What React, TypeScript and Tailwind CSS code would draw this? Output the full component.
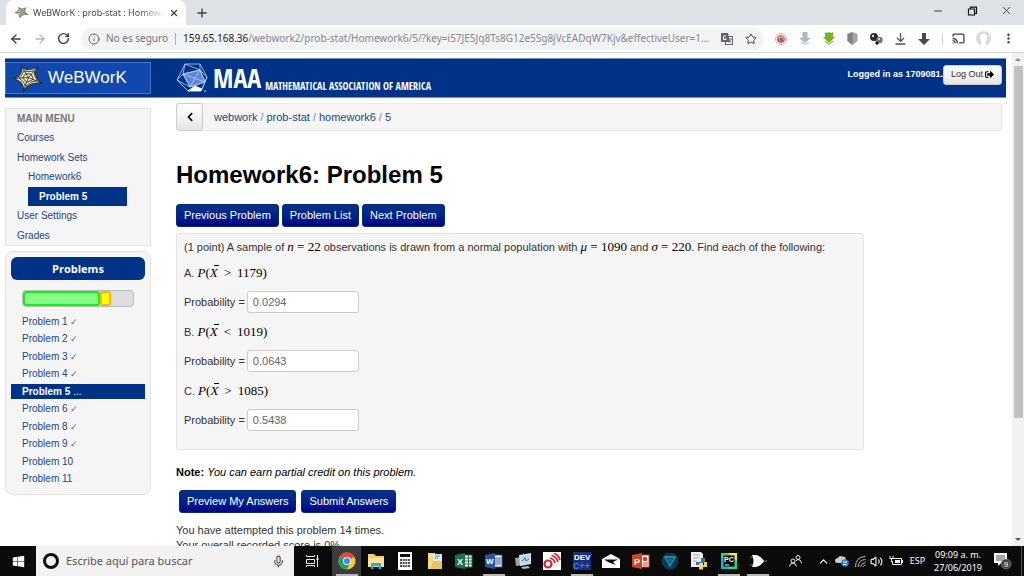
import type { ReactNode } from "react";
import { ArrowLeft, ArrowRight, RotateCw, Info, Plus, X, Star, Cast, MoreVertical, Mic, ChevronUp, Volume2, Minus } from "lucide-react";
import { FaChevronLeft, FaSignOutAlt, FaWindows } from "react-icons/fa";

interface ProblemLink {
  label: string;
  mark?: string;
}

interface Part {
  letter: string;
  sign: string;
  bound: string;
  answer: string;
}

const PROBLEMS: ProblemLink[] = [
  { label: "Problem 1", mark: "✓" },
  { label: "Problem 2", mark: "✓" },
  { label: "Problem 3", mark: "✓" },
  { label: "Problem 4", mark: "✓" },
  { label: "Problem 5", mark: "..." },
  { label: "Problem 6", mark: "✓" },
  { label: "Problem 8", mark: "✓" },
  { label: "Problem 9", mark: "✓" },
  { label: "Problem 10" },
  { label: "Problem 11" },
];

const PARTS: Part[] = [
  { letter: "A", sign: ">", bound: "1179", answer: "0.0294" },
  { letter: "B", sign: "<", bound: "1019", answer: "0.0643" },
  { letter: "C", sign: ">", bound: "1085", answer: "0.5438" },
];

function WebIcon({ size }: { size: number }) {
  return (
    <svg width={size} height={size} viewBox="0 0 32 28" fill="none" stroke="#2b2b2b" strokeWidth="0.9" className="shrink-0">
      <path d="M0.500 14 Q6 13 8 10 Q11 6 9.500 1 Q13 5 17 5 Q22 5 27 2 Q23 7 25 12 Q27 17 31.500 19 Q25 18 20 20 Q15 22 12 27 Q12 21 9 18 Q6 15 0.500 14 Z" fill="#efedcb" strokeWidth="1.200" />
      <path d="M1 14 L17 13 M10 2 L17 13 L26 3 M17 13 L31 19 M17 13 L12 26" />
      <path d="M7 13.500 Q11 11 12 6 Q17 8 23 6 Q22 11 26 16 Q19 17 14 22 Q13 17 7 13.500 Z M11 13.300 L14 9 L20 9.500 L22 15 L15 18 Z" />
    </svg>
  );
}

function MaaIcon() {
  return (
    <svg width="33" height="30" viewBox="0 0 33 30" fill="none" stroke="#b9cdf3" strokeWidth="0.8" className="shrink-0">
      <path d="M7 11 L24 7 L29 19 L14 24 Z" fill="#5f86d6" />
      <path d="M9 1 L24 1 L31 14 L26 26 L12 28 L1 17 Z" />
      <path d="M9 1 L7 11 L24 7 L9 1 M24 1 L24 7 L31 14 L29 19 L24 7 L14 24 L7 11 L1 17 L14 24 L29 19 L26 26 M1 17 L12 28 M7 11 L29 19" />
      <path d="M12 28 L19 23 L26 26 L25 28 Z" fill="#fff" stroke="#fff" />
      <circle cx="29" cy="28" r="0.8" fill="#fff" stroke="none" />
    </svg>
  );
}

function BrowserChrome() {
  return (
    <header className="shrink-0 bg-[#dee1e6] font-['Noto_Sans',sans-serif] text-[#3c4043]">
      <div className="flex h-[25px] items-stretch">
        <div className="ml-[6px] flex w-[180px] items-center rounded-t-lg bg-white pl-[9px] pr-[6px]">
          <WebIcon size={13} />
          <span className="ml-[5px] w-[132px] whitespace-nowrap bg-gradient-to-r from-[#3c4043] from-80% to-transparent bg-clip-text text-[9px] text-transparent">
            WeBWorK : prob-stat : Homewor
          </span>
          <button aria-label="Close tab" className="ml-[4px]"><X size={10} strokeWidth={3} /></button>
        </div>
        <button aria-label="New tab" className="ml-[9px]"><Plus size={14} strokeWidth={2.4} /></button>
        <div className="ml-auto flex items-center gap-[22px] pr-[11px] pb-1">
          <button aria-label="Minimize"><Minus size={12} strokeWidth={2} /></button>
          <button aria-label="Restore">
            <svg width="12" height="12" viewBox="0 0 12 12" fill="none" stroke="#111" strokeWidth="1.2">
              <path d="M2.5 4 H8.500 V10 H2.5 Z M4.500 4 V2.200 H10.500 V8.300 H8.500" />
            </svg>
          </button>
          <button aria-label="Close"><X size={13} strokeWidth={1.8} /></button>
        </div>
      </div>
      <div className="flex h-7 items-center border-b border-[#d5d6d8] bg-white pl-[9px] pr-[9px]">
        <div className="flex items-center gap-[10px]">
          <button aria-label="Back"><ArrowLeft size={14} strokeWidth={2.4} /></button>
          <button aria-label="Forward"><ArrowRight size={14} strokeWidth={2.2} className="text-[#b5b7ba]" /></button>
          <button aria-label="Reload"><RotateCw size={13} strokeWidth={2.6} /></button>
        </div>
        <div className="ml-[11px] flex h-[22px] min-w-0 flex-1 items-center rounded-full bg-[#f1f3f4] pl-[7px] pr-[7px] text-[11px]">
          <Info size={12} strokeWidth={2} className="shrink-0 text-[#5f6368]" />
          <span className="ml-[6px] shrink-0 text-[10px] text-[#6f7377]">No es seguro</span>
          <span className="mx-[7px] h-3 w-px shrink-0 bg-[#a9acb0]" />
          <span className="min-w-0 flex-1 truncate text-[10px] text-[#85888c]">
            <span className="text-[#202124]">159.65.168.36</span>
            /webwork2/prob-stat/Homework6/5/?key=i57JE5Jq8Ts8G12e5Sg8jVcEADqW7Kjv&amp;effectiveUser=1...
          </span>
          <button aria-label="Translate" className="ml-3 shrink-0">
            <svg width="12" height="12" viewBox="0 0 12 12" fill="none" stroke="#5f6368">
              <rect x="4.500" y="3.500" width="7" height="8" fill="#fff" />
              <path d="M0 0 H7 L9 9 H0 Z" fill="#5f6368" stroke="none" />
              <path d="M5 3 H2.500 V6.500 H5 V5" stroke="#fff" />
              <path d="M7 6 H11 M9 5 V6 M10.500 6 L7.500 10 M8 7 L10.500 10" strokeWidth="0.7" />
            </svg>
          </button>
          <button aria-label="Bookmark" className="ml-[12px] shrink-0"><Star size={12} strokeWidth={2} /></button>
        </div>
        <div className="flex items-center gap-[12px] pl-[11px]">
          <svg width="12" height="12" viewBox="0 0 12 12">
            <circle cx="6" cy="6" r="5.500" fill="#fbe9f0" stroke="#d58ba6" strokeWidth="0.700" />
            <circle cx="6" cy="6" r="3.800" fill="#e33c34" />
            <path d="M3 3.800 L8.500 3 L9 7 L5 9 Z" fill="#f2b632" />
            <circle cx="6.500" cy="6.800" r="2" fill="#597bb8" />
          </svg>
          <svg width="12" height="13" viewBox="0 0 12 13"><path d="M3.500 0 H8.500 V6 H12 L6 11 L0 6 H3.500 Z" fill="#a9bac3" /><path d="M2 10.500 L6 12.500 L10 10.500" stroke="#a9bac3" fill="none" /></svg>
          <svg width="12" height="13" viewBox="0 0 12 13"><path d="M2 0 L4 1 L6 0 L8 1 L10 0 V5 H12 L6 11 L0 5 H2 Z" fill="#74b816" /><path d="M2 9 L6 12.500 L10 9" stroke="#5c9a12" fill="none" /></svg>
          <svg width="11" height="13" viewBox="0 0 11 13"><path d="M5.500 0 L10.500 2 V9 L5.500 13 L0.500 9 V2 Z" fill="#a5a5a5" /><path d="M5.500 0 V13 L0.500 9 V2 Z" fill="#828282" /></svg>
          <svg width="13" height="12" viewBox="0 0 13 12">
            <circle cx="4" cy="4" r="4" fill="#2a2a2a" /><circle cx="9.500" cy="7" r="3.200" fill="#777" /><circle cx="7" cy="10" r="1.800" fill="#222" />
            <circle cx="3" cy="3" r="1.200" fill="#ddd" /><circle cx="9" cy="6" r="1.100" fill="#ddd" />
          </svg>
          <svg width="11" height="12" viewBox="0 0 11 12" fill="none" stroke="#505357" strokeWidth="1.300"><path d="M5.500 0 V8 M2 5 L5.500 8.400 L9 5 M0.500 11 H10.500" /></svg>
          <svg width="12" height="12" viewBox="0 0 12 12"><path d="M4 0 H8 V6 H12 L6 12 L0 6 H4 Z" fill="#4a4a4a" /></svg>
          <span className="h-3 w-px bg-[#cfd1d4]" />
        </div>
        <div className="flex items-center gap-[11px] pl-[9px]">
          <button aria-label="Cast"><Cast size={13} strokeWidth={2.4} /></button>
          <button aria-label="Profile">
            <svg width="15" height="15" viewBox="0 0 15 15">
              <circle cx="7.500" cy="7.500" r="7.500" fill="#d9dadc" /><ellipse cx="7.500" cy="6.800" rx="3.600" ry="4" fill="#fff" /><rect x="5" y="9.500" width="5" height="5.500" fill="#fff" />
            </svg>
          </button>
          <button aria-label="Menu"><MoreVertical size={13} strokeWidth={2.6} /></button>
        </div>
      </div>
    </header>
  );
}

function Navbar() {
  return (
    <div className="flex h-10 items-center border-y border-[#7190c8] bg-[#003388] text-white">
      <a href="#webwork" className="flex h-8 w-[146px] shrink-0 items-center border border-[#4c74c2] bg-[#1048ae] pl-[6px] text-[17px]">
        <WebIcon size={31} />
        <span className="ml-[5px]">WeBWorK</span>
      </a>
      <a href="#maa" className="ml-[25px] flex items-center font-['Open_Sans_Condensed','Liberation_Sans_Narrow','Liberation_Sans',sans-serif] font-bold">
        <MaaIcon />
        <span className="ml-1 text-[26px] leading-8">MAA</span>
        <span className="ml-[4px] pt-4 text-[10px] leading-4">MATHEMATICAL ASSOCIATION OF AMERICA</span>
      </a>
      <div className="ml-auto flex items-center pr-1 pb-[7px] text-[9px]">
        <span className="font-bold">Logged in as 1709081.</span>
        <button className="flex h-5 items-center gap-[2px] rounded-[3px] border border-[#ccc] bg-gradient-to-b from-white to-[#e6e6e6] px-[7px] text-[#333]">
          Log Out <FaSignOutAlt size={9} className="text-black" />
        </button>
      </div>
    </div>
  );
}

function Sidebar() {
  return (
    <aside className="w-[146px] shrink-0 pt-[5px] text-[10px] text-[#1c4587]">
      <nav className="flex h-[138px] flex-col border border-[#e3e3e3] bg-[#f5f5f5] leading-[19px]">
        <h2 className="flex-1 pl-[11px] font-bold text-[#777]">MAIN MENU</h2>
        <a href="#courses" className="flex-1 pl-[11px]">Courses</a>
        <a href="#sets" className="flex-1 pl-[11px]">Homework Sets</a>
        <a href="#hw6" className="flex-1 pl-[22px]">Homework6</a>
        <a href="#p5" className="ml-[22px] mr-[23px] flex-1 bg-[#003388] pl-[11px] font-bold text-white">Problem 5</a>
        <a href="#settings" className="flex-1 pl-[11px]">User Settings</a>
        <a href="#grades" className="flex-1 pl-[11px]">Grades</a>
      </nav>
      <nav className="mt-[5px] rounded-lg border border-[#e3e3e3] bg-[#f5f5f5] px-[5px] pt-[5px] pb-[6px]">
        <h2 className="rounded-md bg-[#003388] text-center font-['Open_Sans',sans-serif] text-[11px] font-bold leading-[23px] text-white">Problems</h2>
        <div className="mx-[11px] mt-[10px] mb-[6px] flex h-[17px] overflow-hidden rounded-[4px] border border-[#bbb] bg-[#ddd]">
          <div className="w-[70%] rounded-[3px] border-2 border-[#12f312] bg-[#8f8]" />
          <div className="w-[10%] rounded-[3px] border-2 border-[#ffb01f] bg-[#ff0]" />
        </div>
        <ul className="flex h-[175px] flex-col">
          {PROBLEMS.map((p) => (
            <li key={p.label} className="flex flex-1 items-center">
              <a
                href="#problem"
                className={p.mark === "..." ? "flex-1 bg-[#003388] pl-[11px] font-bold leading-[15px] text-white" : "flex-1 pl-[11px] leading-[15px]"}
              >
                {p.label} <span className={p.mark === "..." ? "font-normal" : "text-[9px] text-[#667]"}>{p.mark}</span>
              </a>
            </li>
          ))}
        </ul>
      </nav>
    </aside>
  );
}

function BlueButton({ children }: { children: ReactNode }) {
  return (
    <button className="h-[23px] whitespace-nowrap rounded-[3px] border border-[#0a2a78] bg-gradient-to-b from-[#003388] to-[#000088] px-[7px] text-[11px] text-white">
      {children}
    </button>
  );
}

function MathText({ children }: { children: ReactNode }) {
  return <span className="font-['Liberation_Serif',serif] text-[13px] text-black">{children}</span>;
}

function ProblemPage() {
  return (
    <main className="min-w-0 flex-1 text-[11px] text-[#333]">
      <div className="flex h-7 items-center rounded-[3px] border border-[#e8e8e8] bg-[#f5f5f5]">
        <button aria-label="Back to set" className="-my-px -ml-px flex h-7 w-[27px] items-center justify-center rounded-[3px] border border-[#ccc] bg-gradient-to-b from-white to-[#e6e6e6]">
          <FaChevronLeft size={10} className="text-black" />
        </button>
        <div className="ml-[11px] flex gap-[3px] text-[#1c4587]">
          <a href="#webwork">webwork</a>
          <span className="text-[#888]">/</span>
          <a href="#prob-stat">prob-stat</a>
          <span className="text-[#888]">/</span>
          <a href="#homework6">homework6</a>
          <span className="text-[#888]">/</span>
          <span>5</span>
        </div>
      </div>
      <h1 className="mt-7 text-[24px] font-bold leading-8 text-black">Homework6: Problem 5</h1>
      <div className="mt-[13px] flex gap-[3px]">
        <BlueButton>Previous Problem</BlueButton>
        <BlueButton>Problem List</BlueButton>
        <BlueButton>Next Problem</BlueButton>
      </div>
      <section className="mt-[6px] w-5/6 rounded-[3px] border border-[#e3e3e3] bg-[#f5f5f5] px-[7px] pt-[3px] pb-[15px]">
        <p className="whitespace-nowrap leading-5">
          (1 point) A sample of <MathText><i>n</i> = 22</MathText> observations is drawn from a normal population with{" "}
          <MathText><i>μ</i> = 1090</MathText> and <MathText><i>σ</i> = 220</MathText>. Find each of the following:
        </p>
        {PARTS.map((part) => (
          <div key={part.letter}>
            <p className="pt-[6px] leading-5">
              {part.letter}.{" "}
              <MathText>
                <i>P</i>(<i className="relative">X<span className="absolute left-[4px] top-0 h-px w-[5px] bg-black" /></i>
                <span className="mx-[6px]">{part.sign}</span>
                {part.bound})
              </MathText>
            </p>
            <label className="mt-2 flex items-center gap-[2px] pb-[3px]">
              Probability =
              <input
                type="text"
                defaultValue={part.answer}
                className="h-[22px] w-28 rounded-[3px] border border-[#ccc] bg-white px-[5px] text-[11px] text-[#666] outline-none"
              />
            </label>
          </div>
        ))}
      </section>
      <p className="mt-[15px] leading-[15px]">
        <b className="text-black">Note:</b> <i className="text-black">You can earn partial credit on this problem.</i>
      </p>
      <div className="mt-[10px] ml-[3px] flex gap-[5px]">
        <BlueButton>Preview My Answers</BlueButton>
        <BlueButton>Submit Answers</BlueButton>
      </div>
      <p className="mt-[10px] leading-[15px]">
        You have attempted this problem 14 times.
        <br />
        Your overall recorded score is 0%.
      </p>
    </main>
  );
}

const APPS: { name: string; open?: boolean; icon: ReactNode }[] = [
  {
    name: "Chrome",
    open: true,
    icon: (
      <>
        <circle cx="9" cy="9" r="8.500" fill="#f7c83c" />
        <path d="M9 9 L1.600 4.800 A8.500 8.500 0 0 1 16.400 4.800 Z" fill="#dd4b3e" />
        <path d="M9 9 L1.600 4.800 A8.500 8.500 0 0 0 9 17.500 L12 11 Z" fill="#1da462" />
        <circle cx="9" cy="9" r="4" fill="#fff" />
        <circle cx="9" cy="9" r="3.100" fill="#4587f3" />
      </>
    ),
  },
  {
    name: "File Explorer",
    icon: (
      <>
        <path d="M1 2 H7 L9 4 H17 V15 H1 Z" fill="#f3ce6b" />
        <path d="M1 6 H17 V15 H1 Z" fill="#fce294" />
        <path d="M4 17 V11 H14 V17 H11.500 V14 H6.500 V17 Z" fill="#35a6e3" />
      </>
    ),
  },
  {
    name: "Calculator",
    icon: (
      <>
        <rect x="2" y="0" width="14" height="18" fill="#fff" />
        <path d="M4 2 H14 V5 H4 Z" fill="#111" />
        <path d="M4 8 H14 M4 11 H14 M4 14 H14" stroke="#111" strokeWidth="1.600" strokeDasharray="2 0.660" />
      </>
    ),
  },
  {
    name: "Documents",
    icon: (
      <>
        <path d="M2 1 H9 V17 H2 Z" fill="#f5d983" />
        <path d="M7 8 H16 V17 H5 Z" fill="#e9c45f" />
        <rect x="7" y="2" width="9" height="7" fill="#dfeaf3" />
        <path d="M9 4 H14 M9 6 H12" stroke="#5f92b8" />
      </>
    ),
  },
  {
    name: "Excel",
    icon: (
      <>
        <rect x="9" y="3" width="8" height="12" fill="#fff" stroke="#1e7145" />
        <path d="M10 6 H17 M10 9 H17 M10 12 H17 M13.500 3 V15" stroke="#1e7145" />
        <path d="M0 3 L10 1 V17 L0 15 Z" fill="#1e7145" />
        <text x="2" y="12.500" fontSize="9" fontWeight="bold" fill="#fff">X</text>
      </>
    ),
  },
  {
    name: "Word",
    open: true,
    icon: (
      <>
        <rect x="9" y="3" width="8" height="12" fill="#fff" stroke="#2b579a" />
        <path d="M10 6 H16 M10 8 H16 M10 10 H16 M10 12 H16" stroke="#2b579a" />
        <path d="M0 3 L10 1 V17 L0 15 Z" fill="#2b579a" />
        <text x="1" y="12" fontSize="8" fontWeight="bold" fill="#fff">W</text>
      </>
    ),
  },
  {
    name: "Monitor",
    icon: (
      <>
        <path d="M1 6 L8 5 L9 13 L2 14 Z" fill="#9aa3a8" />
        <path d="M5 3 L17 1 V12 L6 14 Z" fill="#d5dde1" />
        <path d="M7 5 L15 3.500 V10.500 L8 12 Z" fill="#b5dcef" />
        <path d="M7.500 9 L9.500 8 L11 5.500 L12 9 L15 7" stroke="#3a7aa0" fill="none" />
        <path d="M7 15 L14 14 L16 16 L9 17 Z" fill="#b2b8bb" />
      </>
    ),
  },
  {
    name: "Recorder",
    icon: (
      <>
        <rect width="18" height="18" fill="#fff" />
        <g fill="none" stroke="#d9232e" strokeWidth="1.800">
          <circle cx="5" cy="12" r="3.500" strokeWidth="2.200" />
          <path d="M7 6 Q11 7 12 11 M8.500 3.500 Q14 5 15 10 M11 1.500 Q16 3 17 8" />
        </g>
      </>
    ),
  },
  {
    name: "Dev-C++",
    open: true,
    icon: (
      <>
        <rect width="18" height="18" fill="#1b2f78" />
        <text x="1" y="8" fontSize="8" fontWeight="bold" fill="#fff">DEV</text>
        <text x="0" y="17" fontSize="9" fontWeight="bold" fill="#2d7dff">C++</text>
      </>
    ),
  },
  {
    name: "Mail",
    icon: <path d="M0 7 L9 2 L18 7 V16 H0 Z M2 7.500 H16 L11 10 L14 13 L7 10.500 Z" fill="#fff" fillRule="evenodd" />,
  },
  {
    name: "PowerPoint",
    icon: (
      <>
        <rect x="9" y="3" width="8" height="12" fill="#fff" stroke="#d04423" />
        <path d="M11 11 H16 M11 13 H16" stroke="#d04423" />
        <circle cx="13" cy="7" r="2.300" fill="#d04423" />
        <path d="M0 3 L10 1 V17 L0 15 Z" fill="#d04423" />
        <text x="2" y="12.500" fontSize="9" fontWeight="bold" fill="#fff">P</text>
      </>
    ),
  },
  {
    name: "Vault",
    icon: (
      <>
        <path d="M5 1 H13 L17 6 V12 L13 17 H5 L1 12 V6 Z" fill="#0a3a4c" />
        <path d="M4 5 H14 L9 14 Z" fill="none" stroke="#1b8aa8" strokeWidth="1.800" />
        <path d="M7 7 H11 L9 11 Z" fill="#1c6fc0" />
      </>
    ),
  },
  {
    name: "Python IDLE",
    icon: (
      <>
        <path d="M1 0 H11 L13 2 V15 H1 Z" fill="#eee" />
        <path d="M3 3 H10 M3 6 H9 M3 9 H7" stroke="#aaa" />
        <path d="M11 6 H15 V11 H11 Q9 11 9 13 H6 V10 H11 Z" fill="#3a74a8" />
        <path d="M17 10 V15 H13 V17.500 H9 V13 H14 V10 Z" fill="#fbd145" />
      </>
    ),
  },
  {
    name: "PyCharm",
    open: true,
    icon: (
      <>
        <rect x="1" y="1" width="16" height="16" fill="#21d789" />
        <path d="M8 1 H17 V9 Z" fill="#e9ea4f" />
        <path d="M1 5 V17 H9 Z" fill="#10b8c8" />
        <rect x="3.500" y="3.500" width="11" height="11" fill="#000" />
        <text x="4" y="10" fontSize="7" fontWeight="bold" fill="#fff">PC</text>
        <path d="M5 13 H9" stroke="#fff" />
      </>
    ),
  },
  {
    name: "Logisim",
    open: true,
    icon: (
      <>
        <path d="M3 3 H7 Q12 4 15 9 Q12 14 7 15 H3 Q6 9 3 3 Z" fill="#fff" />
        <path d="M1 5 H4 M1 13 H4 M15 9 H18" stroke="#3c9a3c" />
      </>
    ),
  },
];

function Taskbar() {
  return (
    <footer className="flex h-[30px] shrink-0 items-stretch bg-[#0b0b0b] font-['Noto_Sans',sans-serif] text-white">
      <button aria-label="Start" className="flex w-9 items-center justify-center"><FaWindows size={13} /></button>
      <label className="flex w-[258px] items-center bg-[#f2f2f2] pl-[7px] pr-[9px] text-[#444]">
        <span className="h-4 w-4 shrink-0 rounded-full border-[3px] border-[#111]" />
        <input
          type="text"
          aria-label="Buscar"
          placeholder="Escribe aquí para buscar"
          className="ml-[7px] min-w-0 flex-1 bg-transparent text-[11px] outline-none placeholder:text-[#555]"
        />
        <Mic size={13} />
      </label>
      <button aria-label="Task view" className="flex w-[38px] items-center justify-center">
        <svg width="14" height="12" viewBox="0 0 14 12" fill="none" stroke="#eee">
          <path d="M0.500 0 V1.500 H8.500 V0 M0.500 4.500 H8.500 V8.500 H0.500 Z M0.500 12 V10.500 H8.500 V12 M11.500 0 V12" />
          <path d="M10.500 4 H12.500" strokeWidth="2" />
        </svg>
      </button>
      <div className="grid w-[441px] grid-cols-15">
        {APPS.map((app) => (
          <button
            key={app.name}
            aria-label={app.name}
            className={app.name === "Chrome" ? "flex flex-col items-center justify-end bg-[#3c3c3c]" : "flex flex-col items-center justify-end"}
          >
            <svg width="18" height="18" viewBox="0 0 18 18" className="mb-[4px] font-['Liberation_Sans',sans-serif]">{app.icon}</svg>
            <span className={app.open ? "h-[2px] w-[22px] bg-[#b8b8b8]" : "h-[2px] w-[22px]"} />
          </button>
        ))}
      </div>
      <div className="ml-auto flex items-center">
        <svg width="13" height="12" viewBox="0 0 13 12" fill="none" stroke="#eee">
          <circle cx="4" cy="6" r="2" /><path d="M0.500 11.500 Q1 8 4 8 Q7 8 7.500 11.500" />
          <circle cx="9" cy="2.500" r="2" /><path d="M7 6 Q8 4.500 9 4.500 Q12 4.500 12.500 8" />
        </svg>
        <ChevronUp size={13} className="ml-[15px]" />
        <svg width="14" height="12" viewBox="0 0 14 12" className="ml-[5px]">
          <path d="M3 8 Q0 8 0 5.500 Q0 3.500 3 3 Q4 0 7 1.500 Q11 1 11 5 V8 Z" fill="#ccc" />
          <circle cx="10" cy="8" r="3.800" fill="#1e7fd0" /><path d="M8 7 H12 M12 9.500 H8" stroke="#fff" />
        </svg>
        <svg width="11" height="11" viewBox="0 0 11 11" fill="none" stroke="#bbb" className="ml-[6px]">
          <path d="M0.500 11 Q0.500 1 10.500 0.500 M3 11 Q3.500 4 10.500 3.500 M5.500 11 Q6 7 10.500 6.500 M8 11 Q8.500 9.500 10.500 9" />
        </svg>
        <Volume2 size={13} className="ml-[4px]" />
        <svg width="14" height="10" viewBox="0 0 14 10" fill="none" stroke="#eee" className="ml-[6px]">
          <path d="M4 2.500 H12.500 V8.500 H3.500 V5 M13.500 4 V7 M1 0 V2 M4 0 V2 M0.500 2.500 H4 M2.500 3 V6" /><path d="M6 5.500 H11" strokeWidth="3" />
        </svg>
        <span className="ml-[7px] text-[9px]">ESP</span>
        <div className="ml-[9px] text-center text-[9px] leading-[13px]">
          <div>09:09 a. m.</div>
          <div>27/06/2019</div>
        </div>
        <svg width="18" height="18" viewBox="0 0 18 18" className="ml-[12px] font-['Liberation_Sans',sans-serif]">
          <path d="M0 1 H13 V11 H7 L4 14 V11 H0 Z" fill="#fff" />
          <path d="M2 4 H11 M2 6 H11 M2 8 H9" stroke="#222" strokeWidth="0.800" />
          <circle cx="12" cy="12" r="5" fill="#444" stroke="#999" strokeWidth="0.600" />
          <text x="9.700" y="15" fontSize="8" fill="#fff">9</text>
        </svg>
        <span className="ml-[9px] mr-[2px] h-[30px] w-px bg-[#555]" />
      </div>
    </footer>
  );
}

export default function App() {
  return (
    <div className="flex h-screen flex-col overflow-hidden bg-white">
      <BrowserChrome />
      <div className="flex min-h-0 flex-1 font-['Liberation_Sans',Arial,sans-serif]">
        <div className="min-w-0 flex-1 overflow-hidden pt-[5px] pr-[6px] pl-[5px]">
          <Navbar />
          <div className="flex gap-[25px] pt-[5px] pr-1">
            <Sidebar />
            <ProblemPage />
          </div>
        </div>
        <div className="flex w-3 shrink-0 flex-col items-center bg-[#f1f1f1] py-[5px]">
          <span className="h-0 w-0 border-x-[3px] border-b-[3px] border-x-transparent border-b-[#888]" />
          <span className="mt-[5px] h-[352px] w-[9px] bg-[#c1c1c1]" />
          <span className="mt-auto h-0 w-0 border-x-[3px] border-t-[3px] border-x-transparent border-t-[#555]" />
        </div>
      </div>
      <Taskbar />
    </div>
  );
}
